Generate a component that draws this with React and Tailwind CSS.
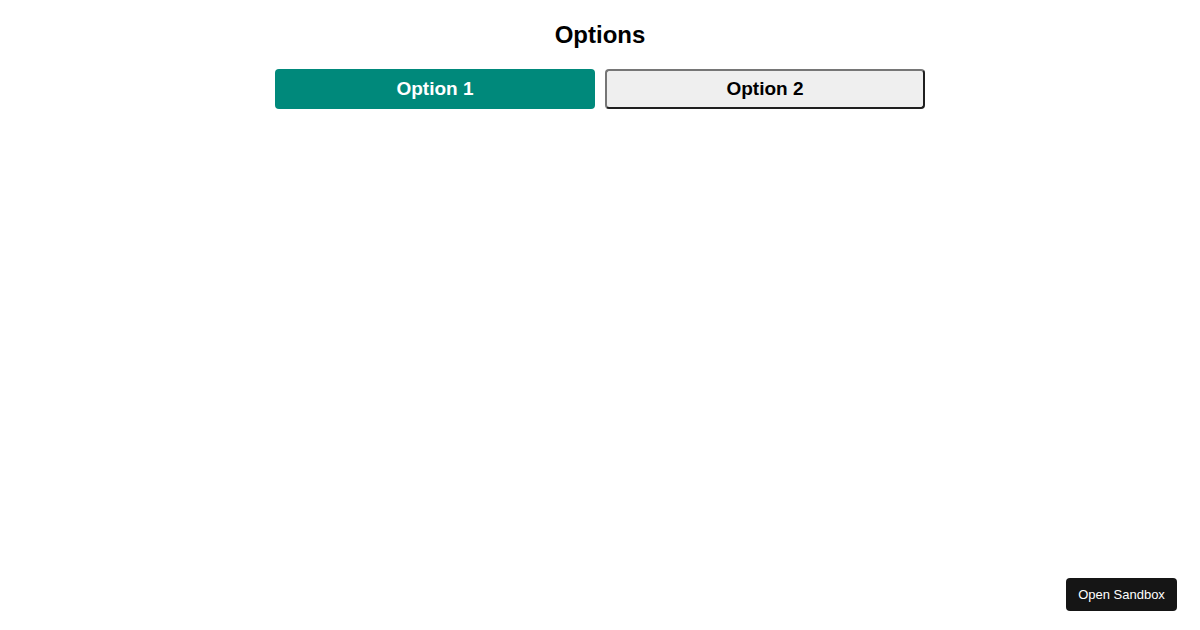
export default function App() {
  return (
    <div className="min-h-screen bg-white font-['Liberation_Sans',Arial,sans-serif] text-black">
      <div className="mx-auto flex w-[650px] flex-col items-center pt-[21px]">
        <h1 className="text-[24px] font-bold leading-[28px]">Options</h1>
        <div className="mt-[20px] flex w-full gap-[10px]">
          <button className="h-[40px] w-[320px] flex-none rounded-[4px] bg-[#00897b] text-[19px] font-bold text-white">
            Option 1
          </button>
          <button className="h-[40px] w-[320px] flex-none rounded-[4px] border-2 border-t-[#767676] border-l-[#767676] border-r-[#1f1f1f] border-b-[#1f1f1f] bg-[#efefef] text-[19px] font-bold text-black">
            Option 2
          </button>
        </div>
      </div>
      <button className="fixed bottom-[19px] right-[23px] h-[33px] w-[111px] rounded-[4px] bg-[#151515] text-[13px] text-white font-['Liberation_Sans',Arial,sans-serif]">
        Open Sandbox
      </button>
    </div>
  );
}
